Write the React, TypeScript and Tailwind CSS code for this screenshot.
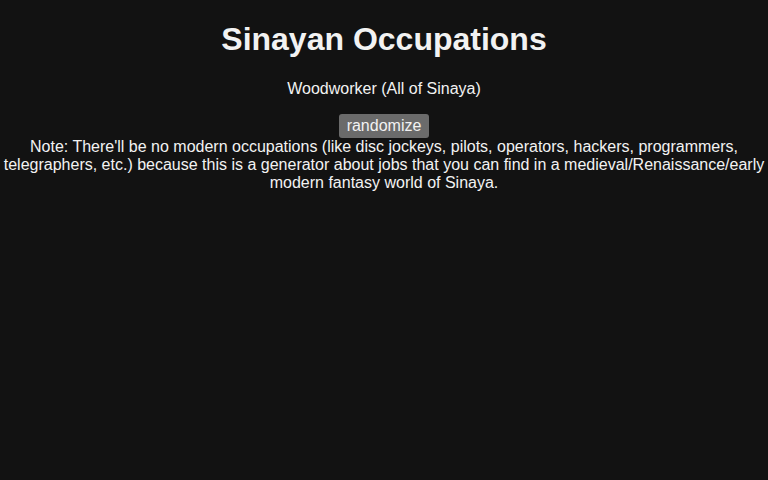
import { useState } from "react";

const jobs = [
  "Woodworker (All of Sinaya)",
  "Blacksmith (All of Sinaya)",
  "Cartographer (All of Sinaya)",
  "Shipwright (Coastal Sinaya)",
  "Herbalist (All of Sinaya)",
];

export default function App() {
  const [job, setJob] = useState(jobs[0]);

  const randomize = () => {
    setJob(jobs[Math.floor(Math.random() * jobs.length)]);
  };

  return (
    <div className="min-h-[480px] bg-[#121212] text-[#f2f2f2] text-center font-['Liberation_Sans',Arial,sans-serif] text-base leading-[18px] pt-[21px]">
      <h1 className="text-[32px] leading-[37px] font-bold">Sinayan Occupations</h1>
      <p className="mt-[22px] mb-4">{job}</p>
      <div>
        <button
          onClick={randomize}
          className="bg-[#6b6b6b] text-[#f2f2f2] rounded-[3px] px-2 py-[3px] leading-[18px]"
        >
          randomize
        </button>
      </div>
      <div>
        Note: There'll be no modern occupations (like disc jockeys, pilots, operators, hackers, programmers,
        telegraphers, etc.) because this is a generator about jobs that you can find in a medieval/Renaissance/early
        modern fantasy world of Sinaya.
      </div>
    </div>
  );
}
